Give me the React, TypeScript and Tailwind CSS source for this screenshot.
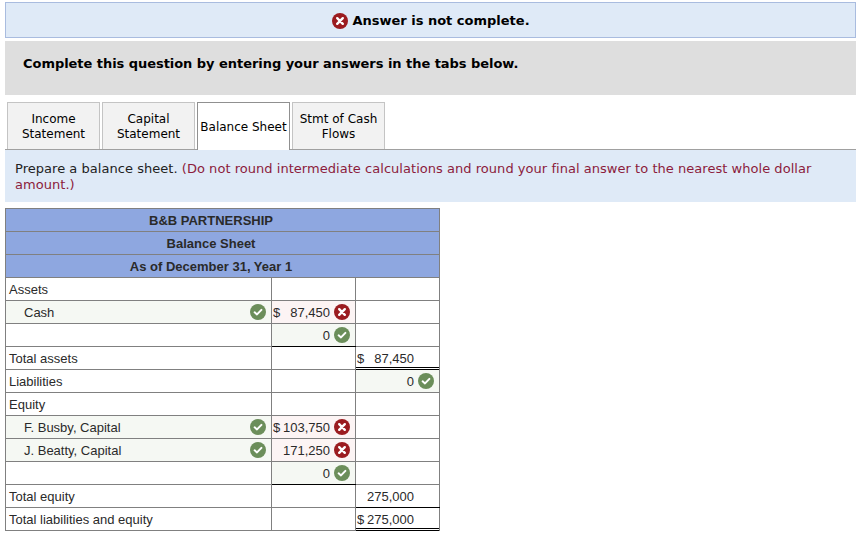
import React from "react";

const CrossIcon = () => (
  <svg viewBox="0 0 16 16" className="w-4 h-4 shrink-0">
    <circle cx="8" cy="8" r="8" fill="#9b1c20" />
    <path d="M5.2 5.2L10.8 10.8M10.8 5.2L5.2 10.8" stroke="#fff" strokeWidth="2.4" strokeLinecap="round" />
  </svg>
);

const CheckIcon = () => (
  <svg viewBox="0 0 16 16" className="w-4 h-4 shrink-0">
    <circle cx="8" cy="8" r="8" fill="#6b8e5a" />
    <path d="M4.6 8.3L7 10.4L11.4 5.9" fill="none" stroke="#fff" strokeWidth="2" strokeLinecap="round" strokeLinejoin="round" />
  </svg>
);

const good = "bg-[#f5f8f3]";
const bad = "bg-[#fcf4f4]";
const td = "border border-[#808080] p-0 h-[23px] align-middle";

const Label = ({ text, indent, mark }: { text?: string; indent?: boolean; mark?: boolean }) => (
  <td className={`${td} ${mark ? good : ""}`}>
    <div className={`flex items-center justify-between h-[22px] pr-[5px] ${indent ? "pl-[18px]" : "pl-[3px]"}`}>
      <span className="pt-[2px]">{text}</span>
      {mark && <CheckIcon />}
    </div>
  </td>
);

const Amount = ({
  value,
  dollar,
  wide,
  status,
  line,
}: {
  value?: string;
  dollar?: boolean;
  wide?: boolean;
  status?: "ok" | "no";
  line?: "single" | "double";
}) => (
  <td
    className={`${td} relative ${status === "ok" ? good : status === "no" ? bad : ""} ${
      line === "single" ? "border-b-black" : ""
    }`}
  >
    {value && (
      <div className="flex items-center h-[22px] pl-[1px] pr-[5px]">
        {dollar && <span className={`pt-[2px] ${wide ? "w-[18px]" : "w-[9px]"}`}>$</span>}
        <span className="ml-auto pt-[2px]">{value}</span>
        <span className="flex justify-end w-[20px] shrink-0">
          {status === "ok" && <CheckIcon />}
          {status === "no" && <CrossIcon />}
        </span>
      </div>
    )}
    {line === "double" && <span className="absolute inset-x-0 bottom-[-1px] h-[3px] border-y border-black" />}
  </td>
);

const tabs = [
  { label: "Income Statement" },
  { label: "Capital Statement" },
  { label: "Balance Sheet", active: true },
  { label: "Stmt of Cash Flows" },
];

export default function App() {
  return (
    <div className="w-[865px] h-[534px] bg-white overflow-hidden pt-[2px] pl-[5px] pr-[9px] font-['DejaVu_Sans',sans-serif] text-[13px] text-black">
      <div className="flex items-center justify-center gap-[4px] h-[36px] border border-[#a9bcdf] bg-[#dfeaf7] pl-[1px] pt-[2px] font-bold">
        <CrossIcon />
        <span>Answer is not complete.</span>
      </div>

      <div className="flex items-center h-[54px] mt-[3px] pl-[18px] bg-[#dedede] pb-[8px] font-bold tracking-[-0.045px]">
        Complete this question by entering your answers in the tabs below.
      </div>

      <div className="flex gap-[2px] h-[48px] mt-[7px] pl-[2px] border-b border-[#a0a0a0]">
        {tabs.map((t) => (
          <div
            key={t.label}
            className={`flex items-center justify-center w-[93px] pt-[2px] text-center leading-[15px] border border-b-0 text-[12px] ${
              t.active ? "h-[48px] bg-white border-[#909090]" : "h-[47px] bg-[#f2f2f2] border-[#c4c4c4]"
            }`}
          >
            <span className={t.active ? "" : "px-[6px]"}>{t.label}</span>
          </div>
        ))}
      </div>

      <div className="h-[52px] bg-[#dfeaf7] px-[10px] pt-[11px] leading-[16px] tracking-[0.037px] text-[#222222]">
        Prepare a balance sheet.{" "}
        <span className="text-[#8c1c3c]">
          (Do not round intermediate calculations and round your final answer to the nearest whole dollar amount.)
        </span>
      </div>

      <table className="mt-[6px] w-[434px] table-fixed border-collapse font-['Liberation_Sans',sans-serif] text-[13px] leading-[22px] text-[#2a2a2a]">
        <colgroup>
          <col className="w-[266px]" />
          <col className="w-[84px]" />
          <col className="w-[84px]" />
        </colgroup>
        <tbody>
          {["B&B PARTNERSHIP", "Balance Sheet", "As of December 31, Year 1"].map((title) => (
            <tr key={title}>
              <td colSpan={3} className={`${td} bg-[#8ea7e0] pt-[2px] pr-[23px] text-center font-bold leading-[20px]`}>
                {title}
              </td>
            </tr>
          ))}
          <tr>
            <Label text="Assets" />
            <Amount />
            <Amount />
          </tr>
          <tr>
            <Label text="Cash" indent mark />
            <Amount value="87,450" dollar wide status="no" />
            <Amount />
          </tr>
          <tr>
            <Label />
            <Amount value="0" status="ok" line="single" />
            <Amount />
          </tr>
          <tr>
            <Label text="Total assets" />
            <Amount />
            <Amount value="87,450" dollar wide line="double" />
          </tr>
          <tr>
            <Label text="Liabilities" />
            <Amount />
            <Amount value="0" status="ok" />
          </tr>
          <tr>
            <Label text="Equity" />
            <Amount />
            <Amount />
          </tr>
          <tr>
            <Label text="F. Busby, Capital" indent mark />
            <Amount value="103,750" dollar status="no" />
            <Amount />
          </tr>
          <tr>
            <Label text="J. Beatty, Capital" indent mark />
            <Amount value="171,250" status="no" />
            <Amount />
          </tr>
          <tr>
            <Label />
            <Amount value="0" status="ok" line="single" />
            <Amount />
          </tr>
          <tr>
            <Label text="Total equity" />
            <Amount />
            <Amount value="275,000" line="single" />
          </tr>
          <tr>
            <Label text="Total liabilities and equity" />
            <Amount />
            <Amount value="275,000" dollar line="double" />
          </tr>
        </tbody>
      </table>
    </div>
  );
}
